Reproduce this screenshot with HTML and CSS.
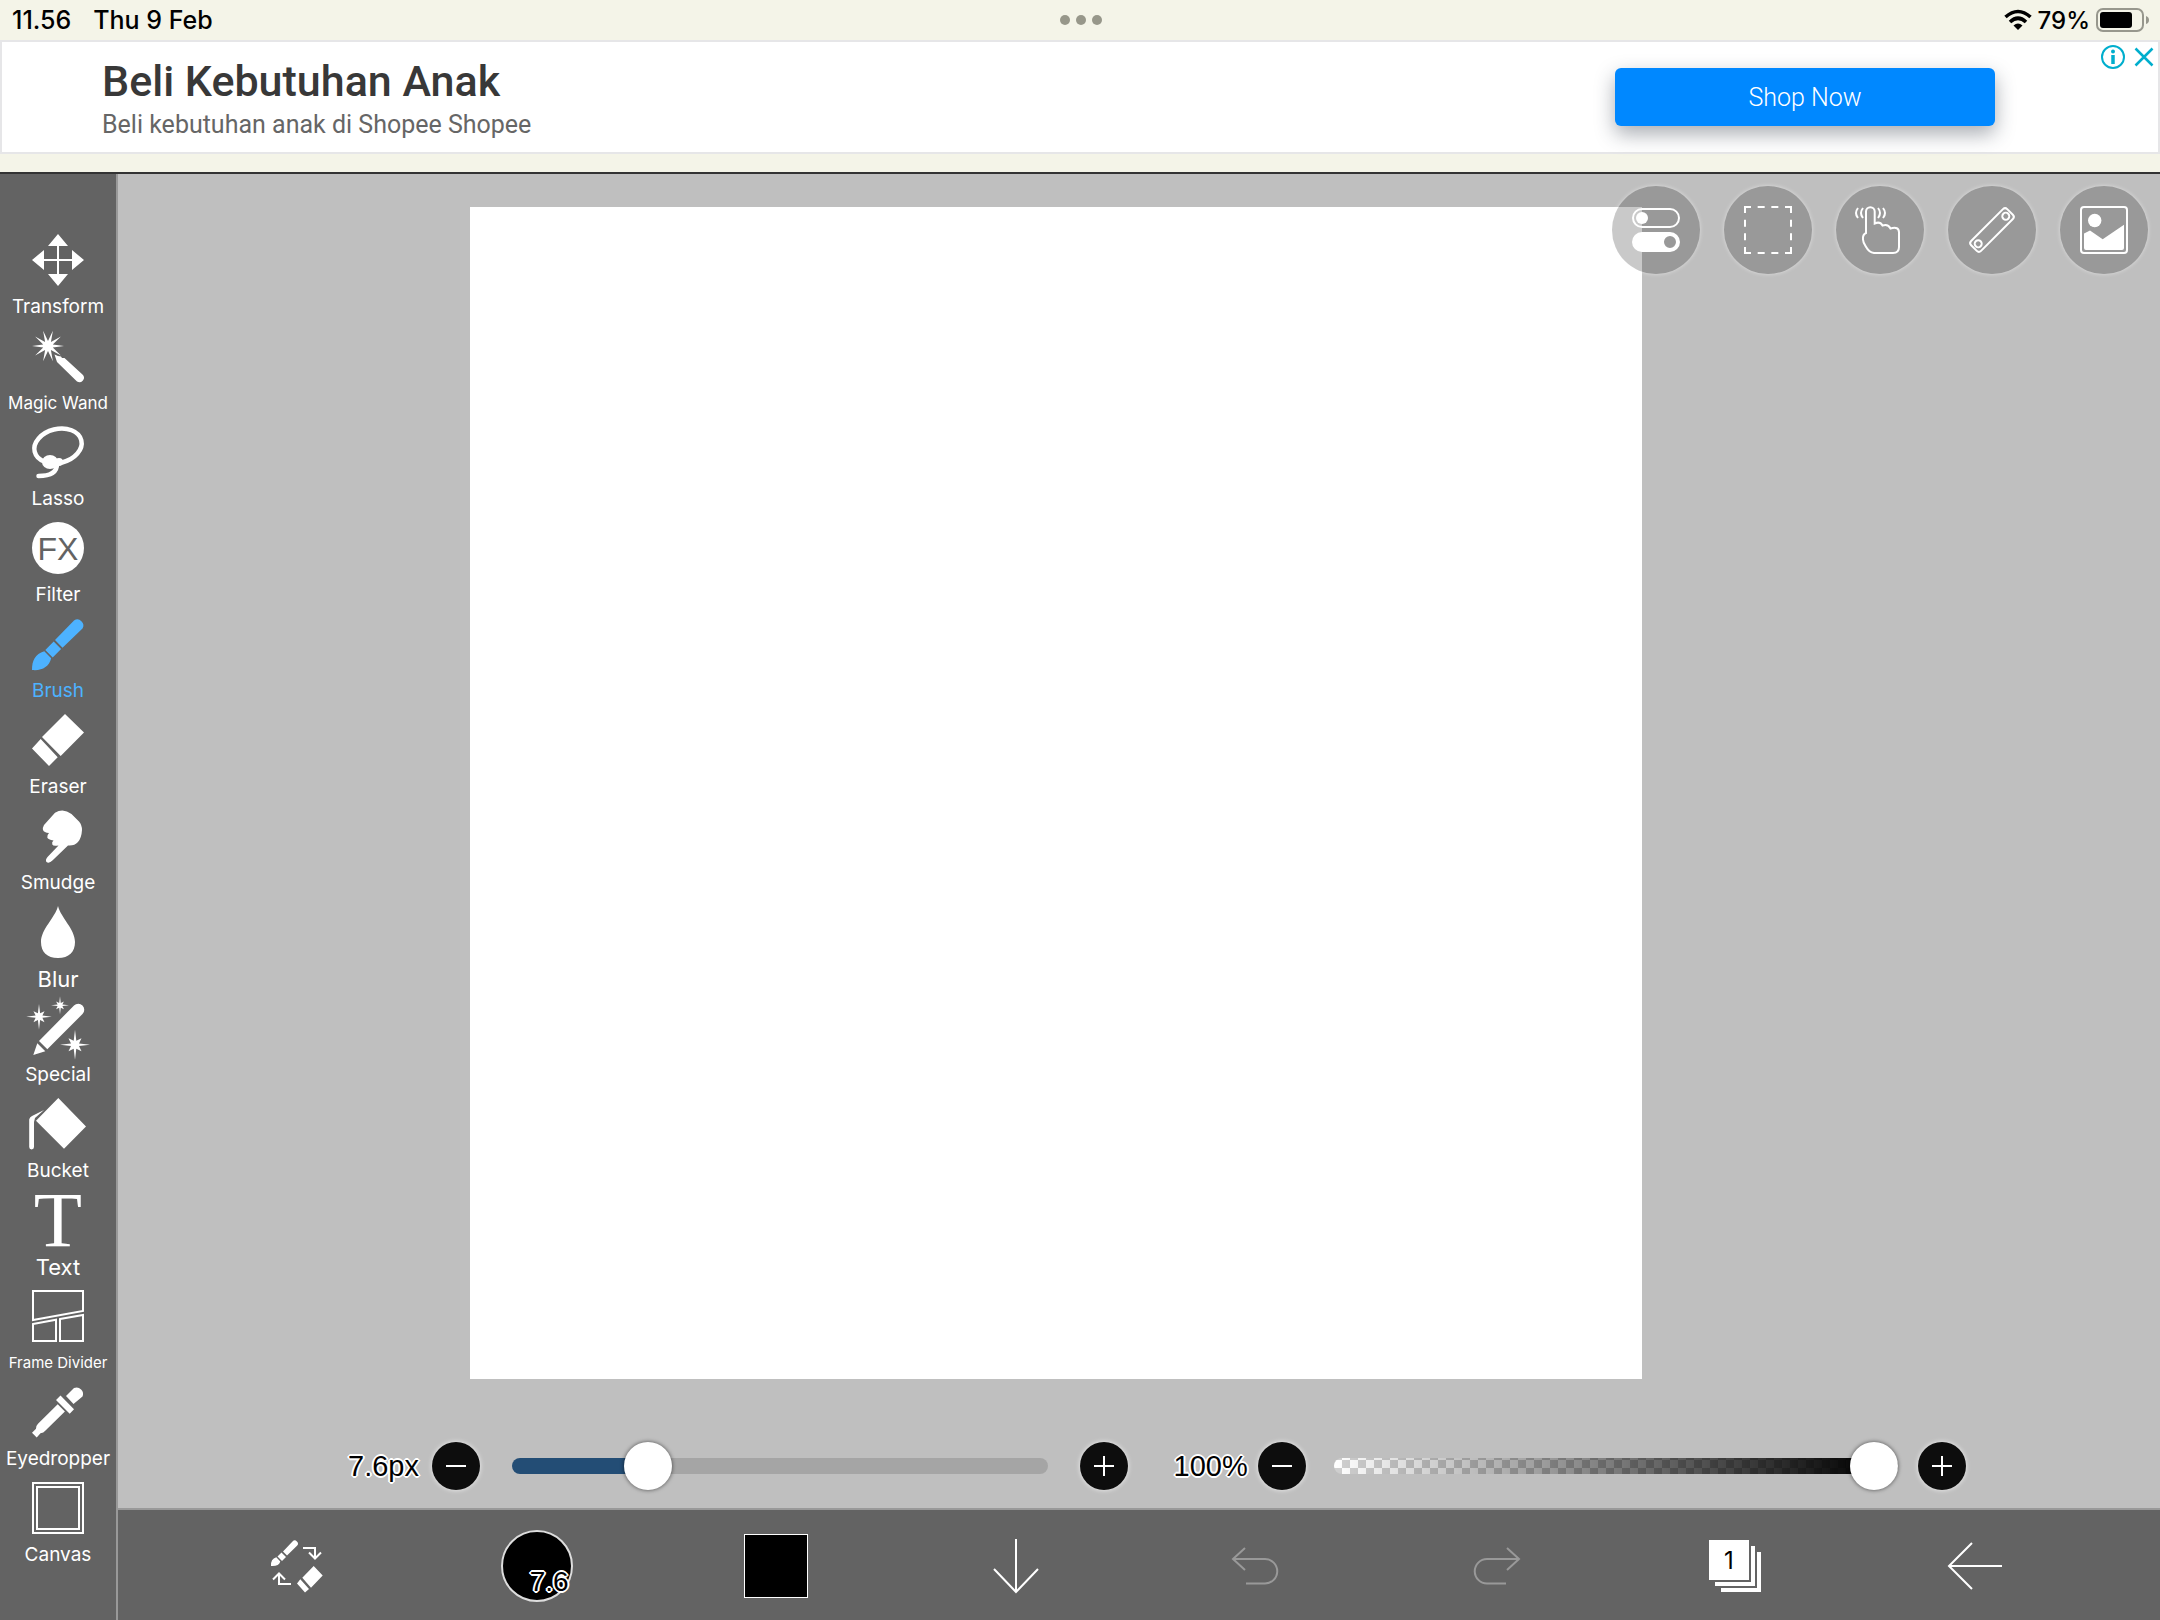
FILE: index.html
```html
<!DOCTYPE html>
<html lang="en">
<head>
    <meta charset="utf-8">
    <title>Canvas</title>
    <link rel="stylesheet" href="styles.css">
</head>
<body>
    <header class="statusBar">
        <div class="statusLeft"><span>11.56</span><span>Thu 9 Feb</span></div>
        <div class="dots"><i></i><i></i><i></i></div>
        <div class="statusRight">
            <svg width="28" height="20" viewBox="0 0 28 20"><path d="M1.5 7Q14-4 26.5 7M6 12Q14 4.500 22 12" fill="none" stroke="#000" stroke-width="3.600"/><path d="M9.500 15.500Q14 11.500 18.500 15.500L14 20Z"/></svg>
            <span>79%</span>
            <svg width="54" height="24" viewBox="0 0 54 24"><rect x="1" y="1" width="46" height="22" rx="6" fill="none" stroke="#97978d" stroke-width="2"/><rect x="4" y="4" width="32" height="16" rx="3"/><path d="M50 8q3 1 3 4t-3 4z" fill="#97978d"/></svg>
        </div>
    </header>

    <section class="ad">
        <div class="adText">
            <h1>Beli Kebutuhan Anak</h1>
            <p>Beli kebutuhan anak di Shopee Shopee</p>
        </div>
        <button class="shopButton">Shop Now</button>
        <div class="adChoices">
            <button aria-label="Ad info"><svg width="26" height="26" viewBox="0 0 26 26"><circle cx="13" cy="13" r="11" fill="none" stroke="#00aecd" stroke-width="2"/><circle cx="13" cy="7.500" r="2" fill="#00aecd"/><path d="M13 11v9" stroke="#00aecd" stroke-width="3.500"/></svg></button>
            <button aria-label="Close ad"><svg width="20" height="26" viewBox="0 0 20 26"><path d="M1.500 4.500l17 17m0-17l-17 17" stroke="#00aecd" stroke-width="2.500"/></svg></button>
        </div>
    </section>

    <div class="workspace">
        <nav class="tools">
            <button class="tool">
                <svg viewBox="0 0 52 52"><path d="M26 0l10 12H16zM26 52l10-12H16zM0 26l12-10v20zM52 26L40 16v20z"/><path class="line" d="M26 8v36M8 26h36"/></svg>
                <span>Transform</span>
            </button>
            <button class="tool small">
                <svg viewBox="0 0 52 52"><path d="M32 16L20.800 17.500 28.900 25.400 18.900 20 20.900 31.200 16 21 11.100 31.200 13.100 20 3.100 25.400 11.200 17.500 0 16 11.200 14.500 3.100 6.600 13.100 12 11.100.8 16 11 20.900.8 18.900 12 28.900 6.600 20.800 14.500z"/><path d="M22.500 24.500l3.500 1.500 3 0.500 1 1.500 2.500 0L51 45a4.500 4.500 0 0 1-6 6.500L25 32z"/></svg>
                <span>Magic Wand</span>
            </button>
            <button class="tool">
                <svg viewBox="0 0 52 52"><ellipse cx="26" cy="20" rx="24" ry="17" transform="rotate(-14 26 20)" fill="none" stroke="currentColor" stroke-width="4.500"/><ellipse cx="18" cy="36" rx="8" ry="7"/><circle cx="27" cy="36" r="4"/><path d="M25 38Q25 50 6.500 50" fill="none" stroke="currentColor" stroke-width="4.500" stroke-linecap="round"/></svg>
                <span>Lasso</span>
            </button>
            <button class="tool">
                <svg viewBox="0 0 52 52"><circle cx="26" cy="26" r="26"/><text class="fx" x="26" y="38" text-anchor="middle">FX</text></svg>
                <span>Filter</span>
            </button>
            <button class="tool active">
                <svg viewBox="0 0 52 52"><path d="M23 22L42 2.500a6 6 0 0 1 8.500 8L30.500 29.700zM21.700 23.500l7.400 7.500-8.400 8.500-7.400-7.500zM12.300 33.300l6.900 7C17 49 10 53 0 52 0 43 3 36 12.300 33.300z"/></svg>
                <span>Brush</span>
            </button>
            <button class="tool">
                <svg viewBox="0 0 52 52"><path d="M33 0l19 18.500L28.700 42 10 23zM8.700 25l17 18.300L17 52 0 34.500z"/></svg>
                <span>Eraser</span>
            </button>
            <button class="tool">
                <svg viewBox="0 0 52 52"><path d="M23 2.700Q31.300-2.500 39.500 4L47 11.500Q50 15 50 20 49.500 28 46 32 42.500 36 36 35.500L20.700 50.300Q17 54 14.500 52 13 50 15.500 47L26.500 35.500Q21 36.500 20.300 34.500 19.500 32 21.500 30.500 16 29.500 15.300 27.500 15 25 17 23 12 22.500 11 20 10.500 17.500 12 15z"/></svg>
                <span>Smudge</span>
            </button>
            <button class="tool large">
                <svg viewBox="0 0 52 52"><path d="M26 0C29 12 43 23 43 36 43 46 37 52 26 52S9 46 9 36C9 23 23 12 26 0z"/></svg>
                <span>Blur</span>
            </button>
            <button class="tool">
                <svg viewBox="0 0 52 52">
                    <defs><path id="spark" d="M0-15L1.300-4 6.500-6.500 4-1.300 15 0 4 1.300 6.500 6.500 1.300 4 0 15-1.300 4-6.500 6.500-4 1.300-15 0-4-1.300-6.500-6.500-1.300-4z"/></defs>
                    <path d="M7 39L42 3.500a6 6 0 0 1 8.500 8.500L15.300 47.300zM5.300 41.300l8 8L1.300 53z"/>
                    <use href="#spark" transform="translate(7 14.700) scale(.85)"/>
                    <use href="#spark" transform="translate(28 3.300) scale(.6)"/>
                    <use href="#spark" transform="translate(43 42.700)"/>
                </svg>
                <span>Special</span>
            </button>
            <button class="tool">
                <svg viewBox="0 0 52 52"><path d="M26.300 0L54 28.500 32 50.700 4 22.700zM12 12L3 20 2 24V49a2.400 2.400 0 0 1-4.800 0V21.500Q-2.500 19 0 18z"/></svg>
                <span>Bucket</span>
            </button>
            <button class="tool large">
                <svg viewBox="0 0 52 52"><text class="letter" x="26" y="52" text-anchor="middle">T</text></svg>
                <span>Text</span>
            </button>
            <button class="tool tiny">
                <svg viewBox="0 0 52 52"><path class="line" d="M1 1h50v20L1 30zM1 34l23-4.200V51H1zM28 29l23-4v26H28z"/></svg>
                <span>Frame Divider</span>
            </button>
            <button class="tool">
                <svg viewBox="0 0 52 52"><path d="M34 10L42 2a6.500 6.500 0 0 1 8.500 8.500L41.500 18zM28.500 9.500L42 23.300 37.700 27.700 24 14zM25.700 18.300l7.200 7.200L13.500 44.500Q11.500 47 8.500 47.300L4.700 51.500 0 46.700 4 42.700Q4 39.500 6 37.700z"/></svg>
                <span>Eyedropper</span>
            </button>
            <button class="tool">
                <svg viewBox="0 0 52 52"><path class="line" d="M1 1h50v50H1zM5 5h42v42H5z"/></svg>
                <span>Canvas</span>
            </button>
        </nav>

        <main class="main">
            <div class="stage">
                <div class="canvas"></div>
                <div class="floating">
                    <button aria-label="Toggles"><svg viewBox="0 0 48 48"><rect x="1" y="3" width="46" height="18" rx="9"/><circle class="solid" cx="10" cy="12" r="6"/><path class="solid" fill-rule="evenodd" d="M10 26h28a10 10 0 0 1 0 20H10a10 10 0 0 1 0-20zM38 30a6 6 0 1 0 0 12a6 6 0 1 0 0-12z"/></svg></button>
                    <button aria-label="Selection"><svg viewBox="0 0 48 48"><path stroke-dasharray="7 6.667" d="M0 1h48M0 47h48M1 0v48M47 0v48"/></svg></button>
                    <button aria-label="Gestures"><svg viewBox="0 0 48 48"><path d="M10 27V5.500a4.300 4.300 0 0 1 8.700 0V17.500Q24 15 26.500 19.500 32 17.500 34.500 22.500 43 20 43 26.500V41Q43 47 37 47H18Q13 46.500 9.500 40 7 36 7 33.500 6.500 28.500 10 27zM2 2Q-2 7 2 12M7 2Q3 7 7 12M22 2Q26 7 22 12M27 2Q31 7 27 12"/></svg></button>
                    <button aria-label="Ruler"><svg viewBox="0 0 48 48"><g transform="rotate(-45 24 24)"><rect x="-1.500" y="17" width="51" height="14" rx="3"/><circle cx="4.500" cy="24" r="3.500"/><circle cx="43.500" cy="24" r="3.500"/></g></svg></button>
                    <button aria-label="Material"><svg viewBox="0 0 48 48"><rect x="1" y="1" width="46" height="46" rx="3"/><circle class="solid" cx="14.700" cy="14.500" r="6.700"/><path class="solid" d="M4 27.500l6-3 12.700 8.800L44 18.700V42q0 2-2 2H6q-2 0-2-2z"/></svg></button>
                </div>
            </div>

            <div class="sliders">
                <div class="sliderGroup sizeGroup">
                    <label for="size">7.6px</label>
                    <button class="step" aria-label="Smaller"><svg viewBox="0 0 20 20"><path d="M0 10h20"/></svg></button>
                    <input type="range" id="size" class="size" min="0" max="100" value="23">
                    <button class="step" aria-label="Larger"><svg viewBox="0 0 20 20"><path d="M0 10h20M10 0v20"/></svg></button>
                </div>
                <div class="sliderGroup opacityGroup">
                    <label for="opacity">100%</label>
                    <button class="step" aria-label="Less opaque"><svg viewBox="0 0 20 20"><path d="M0 10h20"/></svg></button>
                    <input type="range" id="opacity" class="opacity" min="0" max="100" value="100">
                    <button class="step" aria-label="More opaque"><svg viewBox="0 0 20 20"><path d="M0 10h20M10 0v20"/></svg></button>
                </div>
            </div>

            <footer class="bottomBar">
                <button aria-label="Switch brush and eraser">
                    <svg width="54" height="54" viewBox="0 0 54 54"><path class="fill" d="M13 12.500L22.500 2.500a3 3 0 0 1 4.500 4.300L17 16.500zM11.500 13.500l4.500 4.500-4 4-4.500-4.500zM6.300 18.300l4 4.200Q9 27.500 1 27 .5 20 6.300 18.300zM43.700 27l9 9.500L41 48.700 32.300 38.700zM30.300 40.300L39 50l-4 3.500-8-9z"/><path d="M33 9h12v10M39 13.500l6 6 6-6M21 45H9V35M3 40.500l6-6 6 6"/></svg>
                </button>
                <button class="brushSize" aria-label="Brush size"><span class="disc"><span class="sizeText">7.6</span></span></button>
                <button aria-label="Color"><span class="swatch"></span></button>
                <button aria-label="Hide">
                    <svg width="46" height="54" viewBox="0 0 46 54"><path d="M23 0v52M1 30l22 23 22-23"/></svg>
                </button>
                <button class="off" aria-label="Undo">
                    <svg width="48" height="38" viewBox="0 0 48 38"><path d="M13 1L1 12l12 11M1 12h32a12 12 0 0 1 0 24.500H14"/></svg>
                </button>
                <button class="off" aria-label="Redo">
                    <svg width="48" height="38" viewBox="0 0 48 38"><path d="M35 1l12 11-12 11M47 12H15a12 12 0 0 0 0 24.500H34"/></svg>
                </button>
                <button aria-label="Layers">
                    <svg width="52" height="52" viewBox="0 0 52 52"><path class="fill" d="M0 0h40v40H0zM42 6h4v40H6v-4h36zM48 12h4v40H12v-4h36z"/><text class="count" x="20" y="29" text-anchor="middle">1</text></svg>
                </button>
                <button aria-label="Back">
                    <svg width="54" height="48" viewBox="0 0 54 48"><path d="M24 1L1 24l23 23M1 24h53"/></svg>
                </button>
            </footer>
        </main>
    </div>
</body>
</html>
```

FILE: styles.css
```css
* {
    box-sizing: border-box;
}
body {
    margin: 0;
    height: 100vh;
    display: flex;
    flex-direction: column;
    background-color: #f4f4e8;
    font-family: Inter, "Liberation Sans", sans-serif;
}
button {
    padding: 0;
    border: none;
    background: none;
    font-family: inherit;
    color: inherit;
    cursor: pointer;
}
svg {
    display: block;
    overflow: visible;
}

/* status bar */
.statusBar {
    height: 40px;
    padding: 0 10px 0 12px;
    display: grid;
    grid-template-columns: 1fr auto 1fr;
    align-items: center;
    font-size: 24px;
    font-weight: 500;
    color: #000;
}
.statusLeft {
    display: flex;
    gap: 22px;
    font-size: 25px;
}
.dots {
    display: flex;
    gap: 6px;
}
.dots i {
    width: 10px;
    height: 10px;
    border-radius: 50%;
    background-color: #97978a;
}
.statusRight {
    display: flex;
    justify-content: flex-end;
    align-items: center;
    gap: 6px;
}

/* advert */
.ad {
    position: relative;
    height: 114px;
    display: flex;
    justify-content: space-between;
    align-items: center;
    padding: 0 163px 0 100px;
    background-color: #fff;
    border: 2px solid #e6e6e8;
    font-family: Roboto, sans-serif;
}
.adText {
    padding-top: 8px;
}
.adText h1 {
    margin: 0;
    font-size: 43px;
    line-height: 48px;
    font-weight: 500;
    color: #383838;
}
.adText p {
    margin: 0;
    font-size: 25px;
    line-height: 40px;
    color: #666;
}
.shopButton {
    width: 380px;
    height: 58px;
    border-radius: 6px;
    background-color: #0088ff;
    box-shadow: 0 8px 20px rgba(40, 50, 65, 0.4);
    color: #fff;
    font-size: 25px;
    font-weight: 300;
}
.adChoices {
    position: absolute;
    top: 2px;
    right: 4px;
    display: flex;
    gap: 8px;
}

/* workspace */
.workspace {
    flex: 1;
    min-height: 0;
    margin-top: 18px;
    border-top: 2px solid #333;
    display: flex;
    background-color: #bfbfbf;
}
.tools {
    width: 118px;
    flex: none;
    padding-top: 60px;
    border-right: 2px solid #999;
    background-color: #636363;
    color: #fff;
    display: flex;
    flex-direction: column;
    gap: 2px;
}
.tool {
    display: flex;
    flex-direction: column;
    align-items: center;
    font-size: 19px;
    line-height: 42px;
    white-space: nowrap;
}
.tool svg {
    width: 52px;
    height: 52px;
    fill: currentColor;
}
.tool .line {
    fill: none;
    stroke: currentColor;
    stroke-width: 2;
}
.tool .fx {
    fill: #636363;
    font-family: "Liberation Sans", sans-serif;
    font-size: 32px;
}
.tool .letter {
    font-family: "Liberation Serif", serif;
    font-size: 79px;
}
.tool.active {
    color: #4db2ff;
}
.tool.large {
    font-size: 22px;
}
.tool.small {
    font-size: 17px;
}
.tool.tiny {
    font-size: 15px;
}
.main {
    flex: 1;
    min-width: 0;
    display: flex;
    flex-direction: column;
}
.stage {
    position: relative;
    flex: 1;
    min-height: 0;
    display: flex;
    justify-content: center;
    padding: 33px 166px 0 0;
}
.canvas {
    height: 100%;
    aspect-ratio: 1;
    background-color: #fff;
}
.floating {
    position: absolute;
    top: 12px;
    right: 12px;
    display: flex;
    gap: 24px;
}
.floating button {
    width: 88px;
    height: 88px;
    border-radius: 50%;
    background-color: rgba(40, 40, 40, 0.25);
    box-shadow: 0 0 4px rgba(255, 255, 255, 0.5);
}
.floating svg {
    width: 48px;
    height: 48px;
    margin: auto;
    fill: none;
    stroke: #fff;
    stroke-width: 2;
}
.floating .solid {
    fill: #fff;
    stroke: none;
}

/* brush sliders */
.sliders {
    height: 129px;
    padding: 63px 194px 0 230px;
    display: flex;
    align-items: flex-start;
    gap: 46px;
}
.sliderGroup {
    display: flex;
    align-items: center;
}
.sizeGroup {
    flex: 60;
}
.opacityGroup {
    flex: 61;
}
.sliderGroup label {
    width: 84px;
    font-family: "Liberation Sans", sans-serif;
    font-size: 29px;
    color: #000;
    text-shadow: 2px 0 #fff, -2px 0 #fff, 0 2px #fff, 0 -2px #fff, 1px 1px #fff, -1px -1px #fff, 1px -1px #fff, -1px 1px #fff;
}
.step {
    width: 48px;
    height: 48px;
    border-radius: 50%;
    background-color: #0d0d0d;
    box-shadow: 0 0 5px rgba(255, 255, 255, 0.8);
}
.step svg {
    width: 20px;
    height: 20px;
    margin: auto;
    stroke: #fff;
    stroke-width: 2;
}
input[type="range"] {
    -webkit-appearance: none;
    appearance: none;
    flex: 1;
    min-width: 0;
    height: 48px;
    margin: 0 32px;
    background: none;
}
input[type="range"].opacity {
    margin: 0 20px 0 28px;
}
input[type="range"]::-webkit-slider-runnable-track {
    height: 16px;
    border-radius: 8px;
}
.size::-webkit-slider-runnable-track {
    background: linear-gradient(to right, #234d75 25%, #a5a5a5 25%);
}
.opacity::-webkit-slider-runnable-track {
    background:
        linear-gradient(to right, transparent, #000 96%),
        repeating-conic-gradient(#d0d0d0 0 25%, #fff 0 50%) 0 2px / 16px 16px;
}
input[type="range"]::-webkit-slider-thumb {
    -webkit-appearance: none;
    width: 48px;
    height: 48px;
    margin-top: -16px;
    border-radius: 50%;
    background-color: #fff;
    box-shadow: 0 0 4px rgba(0, 0, 0, 0.6);
}

/* bottom bar */
.bottomBar {
    height: 112px;
    padding: 2px 65px 0 59px;
    border-top: 2px solid #999;
    background-color: #636363;
    display: flex;
}
.bottomBar button {
    flex: 1;
    display: flex;
    justify-content: center;
    align-items: center;
}
.bottomBar svg {
    fill: none;
    stroke: #fff;
    stroke-width: 2;
}
.bottomBar .fill {
    fill: #fff;
    stroke: none;
}
.bottomBar .off svg {
    stroke: #999;
}
.bottomBar .count {
    fill: #000;
    stroke: none;
    font-size: 24px;
}
.disc {
    position: relative;
    width: 72px;
    height: 72px;
    border: 2px solid #ddd;
    border-radius: 50%;
    background-color: #000;
}
.sizeText {
    position: absolute;
    right: 2px;
    bottom: 2px;
    font-family: "Liberation Sans", sans-serif;
    font-size: 28px;
    color: #000;
    text-shadow: 2px 0 #fff, -2px 0 #fff, 0 2px #fff, 0 -2px #fff, 1px 1px #fff, -1px -1px #fff, 1px -1px #fff, -1px 1px #fff;
}
.swatch {
    width: 64px;
    height: 64px;
    border: 1px solid #fff;
    background-color: #000;
}
```
